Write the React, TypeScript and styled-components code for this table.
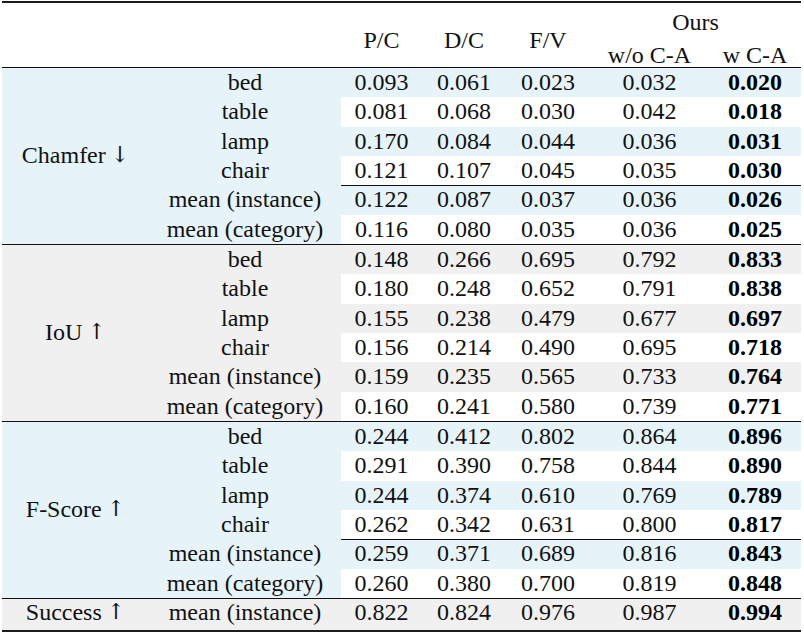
import React from 'react'
import styled, { createGlobalStyle } from 'styled-components'

const GlobalStyle = createGlobalStyle`
  html, body {
    margin: 0;
    padding: 0;
    background: #ffffff;
  }
  body {
    font-family: 'Liberation Serif', 'Times New Roman', serif;
    font-size: 24px;
    color: #111111;
  }
`

const COLUMNS = '147px 192px 81px 84px 84px 119px 92px'

const tones = {
  blue: '#e6f4fa',
  gray: '#f0f0f0',
}

type Tone = keyof typeof tones

const TableStyles = styled.div`
  width: 799px;
  margin: 1px 0 0 2px;
  border-top: 2px solid #1c1c1c;
  border-bottom: 2px solid #1c1c1c;
`

const HeaderStyles = styled.div`
  display: grid;
  grid-template-columns: ${COLUMNS};
  grid-template-rows: 40px 24px;
  border-bottom: 1px solid #111;
  line-height: 24px;
`

const HeadCell = styled.div<{ $col: string; $row: string; $top?: number; $bottom?: number }>`
  grid-column: ${(p) => p.$col};
  grid-row: ${(p) => p.$row};
  display: flex;
  align-items: center;
  justify-content: center;
  padding-top: ${(p) => p.$top ?? 0}px;
  padding-bottom: ${(p) => p.$bottom ?? 0}px;
  box-sizing: border-box;
`

const SectionStyles = styled.div<{ $rows: number; $height: number; $last?: boolean }>`
  display: grid;
  grid-template-columns: ${COLUMNS};
  grid-template-rows: repeat(${(p) => p.$rows}, ${(p) => p.$height}px);
  border-bottom: ${(p) => (p.$last ? 'none' : '1px solid #111')};
  line-height: 24px;
`

const LabelCell = styled.div<{ $rows: number; $tone: Tone; $lift: number }>`
  grid-column: 1;
  grid-row: 1 / span ${(p) => p.$rows};
  display: flex;
  align-items: center;
  justify-content: center;
  gap: 5px;
  padding-bottom: ${(p) => p.$lift}px;
  background: ${(p) => tones[p.$tone]};
`

const Arrow = styled.span`
  font-family: 'DejaVu Serif', serif;
  font-size: 22px;
  line-height: 24px;
  color: #111;
`

const SubCell = styled.div<{ $tone: Tone; $lift: number }>`
  grid-column: 2;
  display: flex;
  align-items: center;
  justify-content: center;
  padding-bottom: ${(p) => p.$lift}px;
  background: ${(p) => tones[p.$tone]};
`

const DataCell = styled.div<{ $tone: Tone; $shaded: boolean; $rule: boolean; $best?: boolean; $lift: number }>`
  display: flex;
  align-items: center;
  justify-content: center;
  padding-bottom: ${(p) => p.$lift}px;
  background: ${(p) => (p.$shaded ? tones[p.$tone] : '#ffffff')};
  box-shadow: ${(p) => (p.$rule ? 'inset 0 1px 0 #111' : 'none')};
  font-weight: ${(p) => (p.$best ? 700 : 400)};
  color: ${(p) => (p.$best ? '#000' : '#111')};
`

interface RowData {
  name: string
  values: string[]
  rule?: boolean
}

interface SectionData {
  label: string
  arrow: string
  tone: Tone
  rows: RowData[]
}

const sections: SectionData[] = [
  {
    label: 'Chamfer',
    arrow: '↓',
    tone: 'blue',
    rows: [
      { name: 'bed', values: ['0.093', '0.061', '0.023', '0.032', '0.020'] },
      { name: 'table', values: ['0.081', '0.068', '0.030', '0.042', '0.018'] },
      { name: 'lamp', values: ['0.170', '0.084', '0.044', '0.036', '0.031'] },
      { name: 'chair', values: ['0.121', '0.107', '0.045', '0.035', '0.030'] },
      { name: 'mean (instance)', values: ['0.122', '0.087', '0.037', '0.036', '0.026'], rule: true },
      { name: 'mean (category)', values: ['0.116', '0.080', '0.035', '0.036', '0.025'] },
    ],
  },
  {
    label: 'IoU',
    arrow: '↑',
    tone: 'gray',
    rows: [
      { name: 'bed', values: ['0.148', '0.266', '0.695', '0.792', '0.833'] },
      { name: 'table', values: ['0.180', '0.248', '0.652', '0.791', '0.838'] },
      { name: 'lamp', values: ['0.155', '0.238', '0.479', '0.677', '0.697'] },
      { name: 'chair', values: ['0.156', '0.214', '0.490', '0.695', '0.718'] },
      { name: 'mean (instance)', values: ['0.159', '0.235', '0.565', '0.733', '0.764'] },
      { name: 'mean (category)', values: ['0.160', '0.241', '0.580', '0.739', '0.771'] },
    ],
  },
  {
    label: 'F-Score',
    arrow: '↑',
    tone: 'blue',
    rows: [
      { name: 'bed', values: ['0.244', '0.412', '0.802', '0.864', '0.896'] },
      { name: 'table', values: ['0.291', '0.390', '0.758', '0.844', '0.890'] },
      { name: 'lamp', values: ['0.244', '0.374', '0.610', '0.769', '0.789'] },
      { name: 'chair', values: ['0.262', '0.342', '0.631', '0.800', '0.817'] },
      { name: 'mean (instance)', values: ['0.259', '0.371', '0.689', '0.816', '0.843'], rule: true },
      { name: 'mean (category)', values: ['0.260', '0.380', '0.700', '0.819', '0.848'] },
    ],
  },
  {
    label: 'Success',
    arrow: '↑',
    tone: 'gray',
    rows: [{ name: 'mean (instance)', values: ['0.822', '0.824', '0.976', '0.987', '0.994'] }],
  },
]

function Section({ section, last }: { section: SectionData; last: boolean }) {
  const { label, arrow, tone, rows } = section
  const single = rows.length === 1
  const height = single ? 31 : 29.33
  const lift = single ? 5 : 1

  return (
    <SectionStyles $rows={rows.length} $height={height} $last={last}>
      <LabelCell $rows={rows.length} $tone={tone} $lift={lift}>
        {label}
        <Arrow>{arrow}</Arrow>
      </LabelCell>
      {rows.map((row, i) => (
        <React.Fragment key={row.name}>
          <SubCell $tone={tone} $lift={lift} style={{ gridRow: i + 1 }}>
            {row.name}
          </SubCell>
          {row.values.map((value, j) => (
            <DataCell
              key={j}
              $tone={tone}
              $lift={lift}
              $shaded={i % 2 === 0}
              $rule={!!row.rule}
              $best={j === row.values.length - 1}
              style={{ gridRow: i + 1, gridColumn: j + 3 }}
            >
              {value}
            </DataCell>
          ))}
        </React.Fragment>
      ))}
    </SectionStyles>
  )
}

function App() {
  return (
    <>
      <GlobalStyle />
      <TableStyles>
        <HeaderStyles>
          <HeadCell $col='1 / 3' $row='1 / 3' />
          <HeadCell $col='3' $row='1 / 3' $top={10}>
            P/C
          </HeadCell>
          <HeadCell $col='4' $row='1 / 3' $top={10}>
            D/C
          </HeadCell>
          <HeadCell $col='5' $row='1 / 3' $top={10}>
            F/V
          </HeadCell>
          <HeadCell $col='6 / 8' $row='1' $bottom={2}>
            Ours
          </HeadCell>
          <HeadCell $col='6' $row='2'>
            w/o C-A
          </HeadCell>
          <HeadCell $col='7' $row='2'>
            w C-A
          </HeadCell>
        </HeaderStyles>
        {sections.map((section, i) => (
          <Section key={section.label} section={section} last={i === sections.length - 1} />
        ))}
      </TableStyles>
    </>
  )
}

export default App
